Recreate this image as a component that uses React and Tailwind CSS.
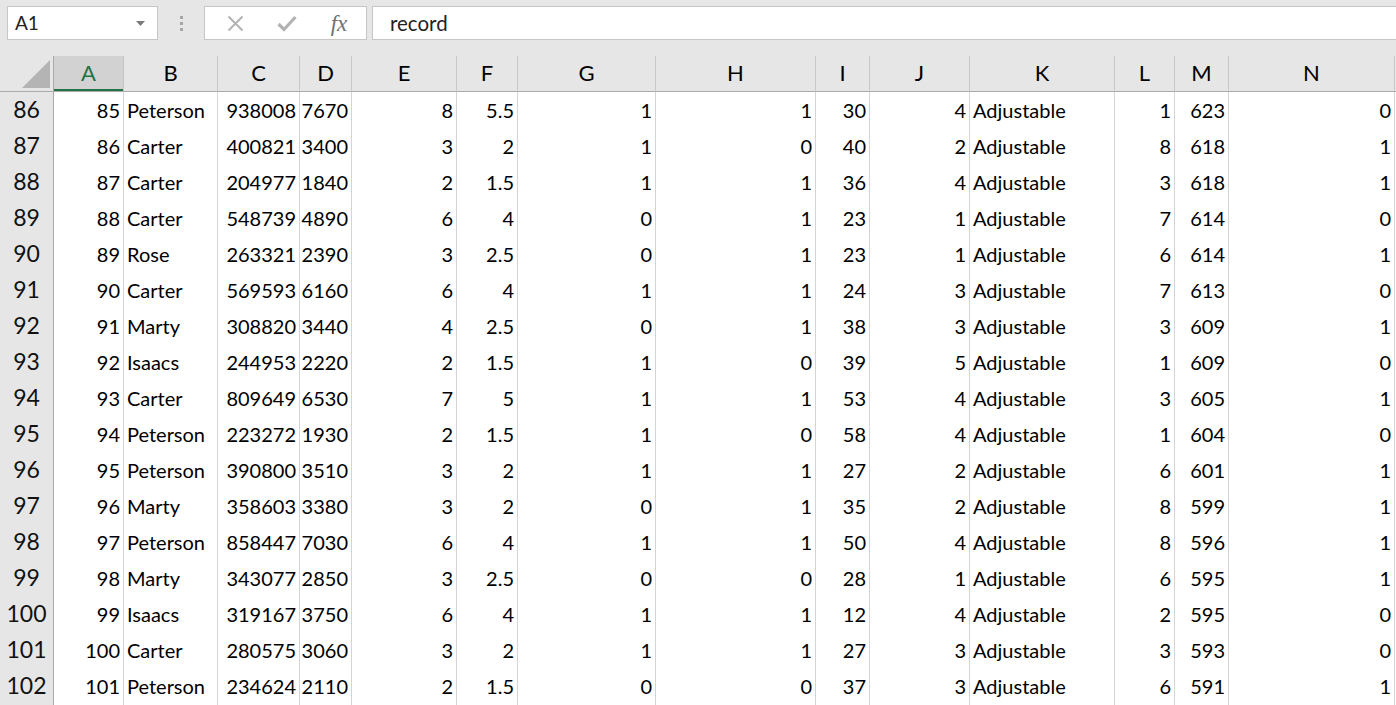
import React from "react";

const cols = [
  { l: "A", w: 70, a: "r" },
  { l: "B", w: 94, a: "l" },
  { l: "C", w: 82, a: "r" },
  { l: "D", w: 52, a: "r" },
  { l: "E", w: 105, a: "r" },
  { l: "F", w: 61, a: "r" },
  { l: "G", w: 138, a: "r" },
  { l: "H", w: 160, a: "r" },
  { l: "I", w: 54, a: "r" },
  { l: "J", w: 100, a: "r" },
  { l: "K", w: 145, a: "l" },
  { l: "L", w: 60, a: "r" },
  { l: "M", w: 54, a: "r" },
  { l: "N", w: 166, a: "r" },
];

const raw = `85 Peterson 938008 7670 8 5.5 1 1 30 4 Adjustable 1 623 0
86 Carter 400821 3400 3 2 1 0 40 2 Adjustable 8 618 1
87 Carter 204977 1840 2 1.5 1 1 36 4 Adjustable 3 618 1
88 Carter 548739 4890 6 4 0 1 23 1 Adjustable 7 614 0
89 Rose 263321 2390 3 2.5 0 1 23 1 Adjustable 6 614 1
90 Carter 569593 6160 6 4 1 1 24 3 Adjustable 7 613 0
91 Marty 308820 3440 4 2.5 0 1 38 3 Adjustable 3 609 1
92 Isaacs 244953 2220 2 1.5 1 0 39 5 Adjustable 1 609 0
93 Carter 809649 6530 7 5 1 1 53 4 Adjustable 3 605 1
94 Peterson 223272 1930 2 1.5 1 0 58 4 Adjustable 1 604 0
95 Peterson 390800 3510 3 2 1 1 27 2 Adjustable 6 601 1
96 Marty 358603 3380 3 2 0 1 35 2 Adjustable 8 599 1
97 Peterson 858447 7030 6 4 1 1 50 4 Adjustable 8 596 1
98 Marty 343077 2850 3 2.5 0 0 28 1 Adjustable 6 595 1
99 Isaacs 319167 3750 6 4 1 1 12 4 Adjustable 2 595 0
100 Carter 280575 3060 3 2 1 1 27 3 Adjustable 3 593 0
101 Peterson 234624 2110 2 1.5 0 0 37 3 Adjustable 6 591 1`;

const rows = raw.split("\n").map((r) => r.split(" "));

const gridCols =
  "grid grid-cols-[54px_70px_94px_82px_52px_105px_61px_138px_160px_54px_100px_145px_60px_54px_166px_1fr]";

export default function App() {
  return (
    <div className="w-[1396px] h-[705px] overflow-hidden bg-[#e6e6e6] font-['Lato',sans-serif] text-black">
      {/* Formula bar */}
      <div className="h-[56px] flex items-start pt-[6px] pl-[7px]">
        <div className="w-[151px] h-[34px] bg-white border border-[#c6c6c6] flex items-center pl-[7px] pr-[12px]">
          <span className="text-[19px] text-[#222] flex-1">A1</span>
          <svg width="9" height="5" viewBox="0 0 9 5">
            <polygon points="0,0 9,0 4.5,5" fill="#7a7a7a" />
          </svg>
        </div>
        <div className="w-[46px] h-[34px] flex flex-col items-center justify-center gap-[3px]">
          <div className="w-[3px] h-[3px] bg-[#a6a6a6]" />
          <div className="w-[3px] h-[3px] bg-[#a6a6a6]" />
          <div className="w-[3px] h-[3px] bg-[#a6a6a6]" />
        </div>
        <div className="w-[163px] h-[34px] bg-white border border-[#c6c6c6] flex items-center">
          <div className="w-[56px] flex justify-center pl-[4px]">
            <svg width="17" height="17" viewBox="0 0 17 17">
              <path d="M1.5 1.5 L15.5 15.5 M15.5 1.5 L1.5 15.5" stroke="#b3b3b3" strokeWidth="2" />
            </svg>
          </div>
          <div className="w-[52px] flex justify-center">
            <svg width="20" height="17" viewBox="0 0 20 17">
              <path d="M1.5 9 L7 14.5 L18.5 2" stroke="#b3b3b3" strokeWidth="3.2" fill="none" />
            </svg>
          </div>
          <div className="w-[52px] flex justify-center">
            <span className="font-['Liberation_Serif',serif] italic text-[23px] text-[#707070] leading-none">
              fx
            </span>
          </div>
        </div>
        <div className="ml-[5px] flex-1 h-[34px] bg-white border border-[#c6c6c6] border-r-0 flex items-center pl-[17px]">
          <span className="text-[20.5px] text-[#222]">record</span>
        </div>
      </div>

      {/* Column headers */}
      <div className={gridCols + " h-[36px]"}>
        <div className="relative bg-[#e6e6e6] border-r border-b border-[#ababab]">
          <svg className="absolute left-[22px] top-[4px]" width="28" height="28" viewBox="0 0 28 28">
            <polygon points="28,0 28,28 0,28" fill="#b4b4b4" />
          </svg>
        </div>
        {cols.map((c, i) => (
          <div
            key={c.l}
            className={
              "relative flex items-center justify-center text-[22px] border-b " +
              (i === 0
                ? "bg-[#d2d2d2] text-[#217346] border-[#ababab] border-r border-r-[#c4c4c4]"
                : "bg-[#e6e6e6] border-[#ababab] border-r border-r-[#c8c8c8]")
            }
          >
            <span className="pb-[2px]">{c.l}</span>
            {i === 0 && <div className="absolute left-0 right-0 bottom-0 h-[2px] bg-[#217346]" />}
          </div>
        ))}
        <div className="bg-[#e6e6e6] border-b border-[#ababab]" />
      </div>

      {/* Rows */}
      {rows.map((r, ri) => (
        <div key={ri} className={gridCols + " h-[36px]"}>
          <div className="bg-[#e6e6e6] border-r border-r-[#ababab] border-b border-b-[#d0d0d0] flex items-center justify-center text-[23px] text-[#111]">
            <span className="pb-[2px]">{86 + ri}</span>
          </div>
          {cols.map((c, ci) => (
            <div
              key={ci}
              className={
                "bg-white border-r border-b border-[#d4d4d4] flex items-center text-[20px] overflow-hidden whitespace-nowrap " +
                (c.a === "r" ? "justify-end pr-[3px]" : "justify-start pl-[3px]")
              }
            >
              <span>{r[ci]}</span>
            </div>
          ))}
          <div className="bg-white border-b border-[#d4d4d4]" />
        </div>
      ))}
    </div>
  );
}
